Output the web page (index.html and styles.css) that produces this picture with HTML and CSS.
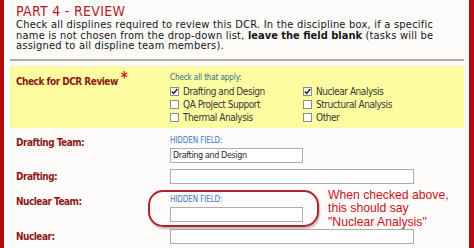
FILE: index.html
```html
<!DOCTYPE html>
<html>
<head>
<meta charset="utf-8">
<link rel="stylesheet" href="styles.css">
</head>
<body>
<div class="frame">
  <div class="content">
    <div class="intro">
      <h1 class="title">PART 4 - REVIEW</h1>
      <p class="lead">Check all displines required to review this DCR. In the discipline box, if a specific name is not chosen from the drop-down list, <b>leave the field blank</b> (tasks will be assigned to all displine team members).</p>
    </div>
    <div class="row review">
      <div class="label">Check for DCR Review<span class="req">*</span></div>
      <div class="field">
        <div class="hint">Check all that apply:</div>
        <div class="checks">
          <label class="check"><span class="box"><svg viewBox="0 0 9 9" width="9" height="9"><path d="M1.8 4.4 L3.7 6.4 L7.3 2.1" fill="none" stroke="#222" stroke-width="1.5"/></svg></span>Drafting and Design</label>
          <label class="check"><span class="box"><svg viewBox="0 0 9 9" width="9" height="9"><path d="M1.8 4.4 L3.7 6.4 L7.3 2.1" fill="none" stroke="#222" stroke-width="1.5"/></svg></span>Nuclear Analysis</label>
          <label class="check"><span class="box"></span>QA Project Support</label>
          <label class="check"><span class="box"></span>Structural Analysis</label>
          <label class="check"><span class="box"></span>Thermal Analysis</label>
          <label class="check"><span class="box"></span>Other</label>
        </div>
      </div>
    </div>
    <div class="row with-hint first">
      <div class="label">Drafting Team:</div>
      <div class="field">
        <div class="hint">HIDDEN FIELD:</div>
        <div class="input short">Drafting and Design</div>
      </div>
    </div>
    <div class="row plain">
      <div class="label">Drafting:</div>
      <div class="field"><div class="input long"></div></div>
    </div>
    <div class="row with-hint callout-row">
      <div class="label">Nuclear Team:</div>
      <div class="field">
        <div class="hint">HIDDEN FIELD:</div>
        <div class="input short"></div>
      </div>
      <div class="ring"></div>
      <div class="note">When checked above,<br>this should say<br>"Nuclear Analysis"</div>
    </div>
    <div class="row plain last">
      <div class="label">Nuclear:</div>
      <div class="field"><div class="input long"></div></div>
    </div>
  </div>
</div>
</body>
</html>
```
FILE: styles.css
```css
html, body {
  margin: 0;
  padding: 0;
  background: #fdfafa;
}
.frame {
  width: 474px;
  height: 248px;
  box-sizing: border-box;
  border-left: 4px solid #b30a0e;
  border-right: 5px solid #b30a0e;
  background: #fdfafa;
  overflow: hidden;
  font-family: "DejaVu Sans", Verdana, sans-serif;
  font-stretch: condensed;
}
.content {
  padding: 0 5px 0 6px;
}
.intro {
  padding: 3px 10px 7px 6px;
  border-bottom: 2px solid #b9adab;
}
.title {
  margin: 0;
  font-size: 14px;
  font-weight: normal;
  color: #b0202a;
  line-height: 16px;
  letter-spacing: 0.3px;
}
.lead {
  margin: 1px 0 0;
  font-size: 11px;
  line-height: 10.5px;
  color: #161616;
  letter-spacing: 0.22px;
}
.lead b { font-weight: bold; letter-spacing: 0; }
.row {
  display: grid;
  grid-template-columns: 154px 1fr;
  padding-left: 6px;
  font-size: 10px;
}
.label {
  font-weight: bold;
  color: #8c1a1a;
  font-size: 10px;
  line-height: 11px;
  letter-spacing: -0.5px;
}
.req {
  color: #d2221c;
  font-size: 15px;
  line-height: 10px;
  margin-left: 3px;
  vertical-align: 2px;
  letter-spacing: 0;
}
.review {
  margin-top: 5px;
  background: #fdfca0;
  padding-top: 7px;
  padding-bottom: 5px;
}
.review .label { line-height: 10px; }
.hint {
  font-size: 8px;
  color: #3d7fc4;
  line-height: 9px;
  letter-spacing: -0.1px;
}
.review .hint {
  color: #2a6b86;
  line-height: 10px;
}
.checks {
  display: grid;
  grid-template-columns: 133px 1fr;
  row-gap: 2px;
  margin-top: 3px;
}
.check {
  display: flex;
  align-items: center;
  gap: 4px;
  font-size: 10px;
  color: #383838;
  line-height: 11px;
  letter-spacing: -0.45px;
}
.box {
  width: 9px;
  height: 9px;
  flex: none;
  box-sizing: border-box;
  border: 1px solid #8c8c8c;
  background: #fff;
  display: flex;
  align-items: center;
  justify-content: center;
}
.box svg { display: block; margin: -1px; }
.with-hint .label { padding-top: 1px; }
.with-hint .hint { margin-bottom: 3px; }
.first { padding-top: 8px; }
.callout-row { padding-top: 11px; position: relative; }
.plain { align-items: center; padding-top: 6px; }
.last { padding-top: 7px; }
.input {
  box-sizing: border-box;
  height: 15px;
  border: 1px solid #adadad;
  background: #fff;
  font-size: 9px;
  line-height: 13px;
  padding-left: 2px;
  color: #2a2a2a;
  letter-spacing: -0.4px;
}
.short { width: 133px; }
.long { width: 244px; }
.ring {
  position: absolute;
  left: 138px;
  top: 6px;
  width: 171px;
  height: 37px;
  border: 2px solid #b1232b;
  border-radius: 15px;
  box-sizing: border-box;
  box-shadow: 1px 2px 2px rgba(110, 110, 110, 0.45);
}
.note {
  position: absolute;
  left: 318px;
  top: 5px;
  font-family: "Liberation Sans", Arial, sans-serif;
  font-stretch: normal;
  font-size: 12.2px;
  line-height: 13.5px;
  color: #c8141c;
  white-space: nowrap;
}
```
